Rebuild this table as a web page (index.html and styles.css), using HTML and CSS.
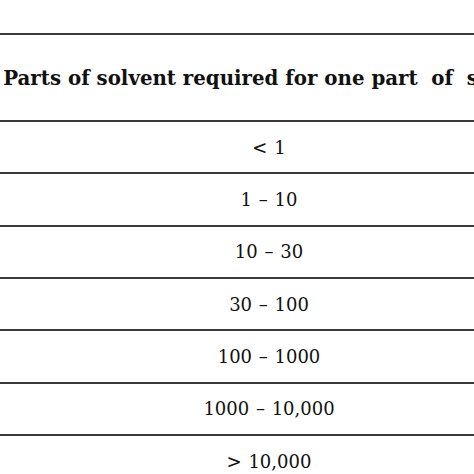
FILE: index.html
```html
<!DOCTYPE html>
<html>
<head>
<meta charset="utf-8">
<link rel="stylesheet" href="styles.css">
</head>
<body>
<div class="table">
  <div class="row head">Parts of solvent required for one part&nbsp; of&nbsp; solute</div>
  <div class="row">&lt; 1</div>
  <div class="row">1 – 10</div>
  <div class="row">10 – 30</div>
  <div class="row">30 – 100</div>
  <div class="row">100 – 1000</div>
  <div class="row">1000 – 10,000</div>
  <div class="row">&gt; 10,000</div>
</div>
</body>
</html>
```
FILE: styles.css
```css
html, body {
  margin: 0;
  padding: 0;
  background: #fff;
  overflow: hidden;
}
.table {
  width: 538px;
  margin-top: 33px;
  font-family: "DejaVu Serif", "Liberation Serif", serif;
  color: #111;
}
.row {
  border-top: 2px solid #3a3a3a;
  height: 50.33px;
  display: flex;
  align-items: center;
  justify-content: center;
  font-size: 18px;
  word-spacing: 1px;
  font-variant-numeric: oldstyle-nums;
}
.row.head {
  height: 85px;
  font-weight: bold;
  font-size: 19.8px;
  word-spacing: 0;
  white-space: nowrap;
}
```
